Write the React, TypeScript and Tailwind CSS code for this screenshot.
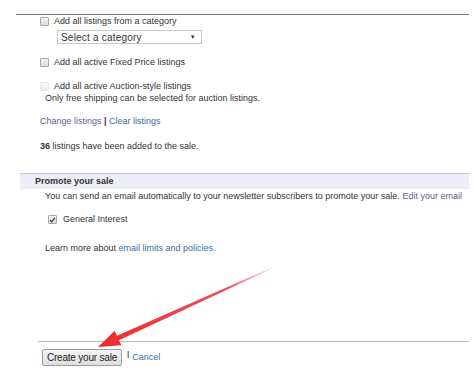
import React from 'react';

function Box({ checked = false, faded = false }: { checked?: boolean; faded?: boolean }) {
    return (
        <span
            className={`inline-flex items-center justify-center w-[9px] h-[9px] rounded-[1px] border bg-gradient-to-b from-[#f4f4f4] to-[#dcdcdc] ${faded ? 'border-[#d8d8d8] opacity-60' : 'border-[#a9a9a9]'}`}
        >
            {checked && (
                <svg width="8" height="8" viewBox="0 0 8 8">
                    <path d="M1.2 4.2 L3.1 6.2 L6.8 1.6" stroke="#333" strokeWidth="1.4" fill="none" />
                </svg>
            )}
        </span>
    );
}

export default function App() {
    return (
        <div className="relative w-[474px] h-[376px] overflow-hidden bg-white text-[#333] text-[9px] leading-[11px] font-['Liberation_Sans',Arial,sans-serif]">
            <div className="pt-[14px]">
                <div className="ml-[16px] w-[453px] border-t border-[#7c7c7c]" />

                <div className="ml-[40px] mt-[2px]">
                    <div className="flex items-center gap-[5px] h-[9px]">
                        <Box />
                        <span>Add all listings from a category</span>
                    </div>
                    <div className="ml-[17px] mt-[4px] w-[145px] h-[14px] border border-[#c8c8c8] flex items-center justify-between pl-[3px] pr-[5px] text-[10px] tracking-[0.2px]">
                        <span>Select a category</span>
                        <span className="text-[6px]">▼</span>
                    </div>

                    <div className="flex items-center gap-[5px] h-[9px] mt-[14px]">
                        <Box />
                        <span>Add all active Fixed Price listings</span>
                    </div>

                    <div className="flex items-center gap-[5px] h-[9px] mt-[15px]">
                        <Box faded />
                        <span>Add all active Auction-style listings</span>
                    </div>
                    <div className="ml-[5px] mt-[2px]">Only free shipping can be selected for auction listings.</div>

                    <div className="mt-[12px]">
                        <span className="text-[#6a5a96]">Change listings</span>
                        <span className="font-bold"> | </span>
                        <span className="text-[#3a6ea5]">Clear listings</span>
                    </div>

                    <div className="mt-[14px]">
                        <span className="font-bold">36</span> listings have been added to the sale.
                    </div>
                </div>

                <div className="ml-[20px] w-[449px] mt-[21px] border-t border-[#c4c4d4] bg-[#eeeef8] h-[16px] flex items-center pl-[15px] font-bold">
                    Promote your sale
                </div>

                <div className="ml-[45px] mt-[2px]">
                    You can send an email automatically to your newsletter subscribers to promote your sale.{' '}
                    <span className="text-[#6a5a96]">Edit your email</span>
                </div>

                <div className="ml-[48px] mt-[13px] flex items-center gap-[6px] h-[9px]">
                    <Box checked />
                    <span>General Interest</span>
                </div>

                <div className="ml-[45px] mt-[19px]">
                    Learn more about <span className="text-[#3a6ea5]">email limits and policies.</span>
                </div>

                <div className="ml-[38px] w-[431px] mt-[87px] border-t border-[#bdbdbd]" />

                <div className="ml-[42px] mt-[7px] flex items-center">
                    <button className="h-[17px] w-[80px] border border-[#9c9c9c] rounded-[2px] bg-gradient-to-b from-[#f6f6f6] to-[#dedede] text-[10px] tracking-[-0.2px] text-[#222]">
                        Create your sale
                    </button>
                    <span className="ml-[5px] self-start text-[8px] font-bold text-[#555] -mt-[1px]">|</span>
                    <span className="ml-[3px] text-[#3a6ea5]">Cancel</span>
                </div>
            </div>

            <svg className="absolute left-0 top-0 pointer-events-none" width="474" height="376">
                <defs>
                    <linearGradient id="tail" x1="272" y1="268" x2="98" y2="347" gradientUnits="userSpaceOnUse">
                        <stop offset="0" stopColor="#e8323c" stopOpacity="0.1" />
                        <stop offset="0.25" stopColor="#e8323c" stopOpacity="0.85" />
                        <stop offset="1" stopColor="#ee2a2a" />
                    </linearGradient>
                </defs>
                <polygon
                    points="98,347 114.7,330.7 117,335.7 271.8,267.6 272.2,268.4 119,340.3 121.3,345.3"
                    fill="url(#tail)"
                />
            </svg>
        </div>
    );
}
